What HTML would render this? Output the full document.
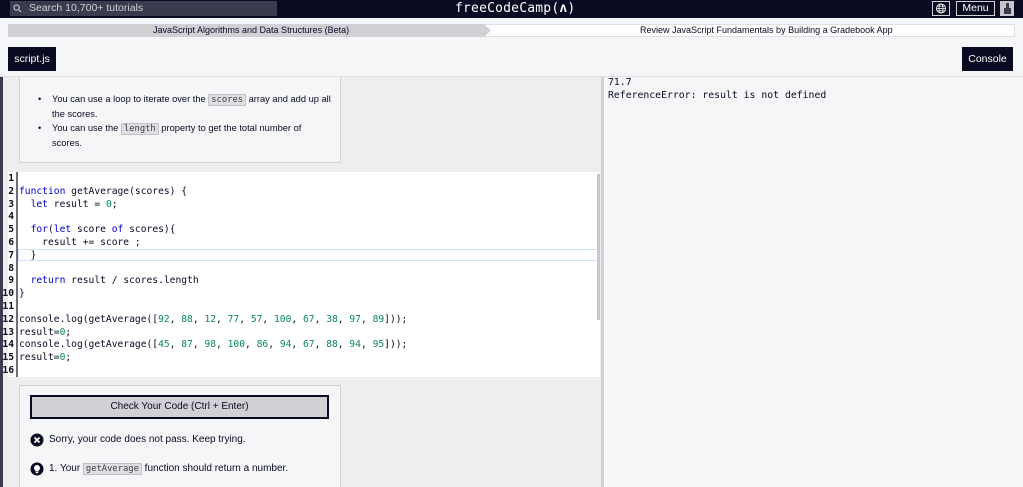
<!DOCTYPE html>
<html><head><style>
*{margin:0;padding:0;box-sizing:border-box}
html,body{width:1023px;height:487px;overflow:hidden}
body{background:#f5f6f7;font-family:"Liberation Sans",sans-serif;position:relative}
.abs{position:absolute}
.nav{left:0;top:0;width:1023px;height:18px;background:#0a0a23}
.mono{font-family:"DejaVu Sans Mono","Liberation Mono",monospace}
code.i{font-family:"DejaVu Sans Mono",monospace;font-size:8.8px;background:#dfdfe2;border:1px solid #c0c0c5;padding:0 2px;color:#3b3b4f}
.code{font-family:"DejaVu Sans Mono",monospace;font-size:9.65px;line-height:12.8px;white-space:pre;color:#0a0a23}
.k{color:#0000cc}.n{color:#09885a}
.li{position:relative;padding-left:14px;white-space:nowrap}
</style></head><body>
<div class="abs nav"></div>
<div class="abs" style="left:10px;top:1px;width:267px;height:15px;background:#3b3b4f"></div>
<svg class="abs" style="left:13px;top:4px" width="9" height="9" viewBox="0 0 9 9"><circle cx="3.6" cy="3.6" r="2.6" fill="none" stroke="#d0d0d5" stroke-width="1"/><path d="M5.5 5.5L8 8" stroke="#d0d0d5" stroke-width="1"/></svg>
<div class="abs" style="left:29px;top:2px;font-size:10.5px;color:#d0d0d5">Search 10,700+ tutorials</div>
<div class="abs mono" style="left:455px;top:1px;font-size:13px;color:#fff;letter-spacing:0.2px">freeCodeCamp(<b>ʌ</b>)</div>
<div class="abs" style="left:932px;top:1px;width:18px;height:15px;border:1px solid #d0d0d5"></div>
<svg class="abs" style="left:935px;top:3px" width="12" height="11" viewBox="0 0 12 11"><circle cx="6" cy="5.5" r="4.5" fill="none" stroke="#fff" stroke-width="0.9"/><ellipse cx="6" cy="5.5" rx="2" ry="4.5" fill="none" stroke="#fff" stroke-width="0.8"/><path d="M1.5 5.5h9M2.2 3.2h7.6M2.2 7.8h7.6" stroke="#fff" stroke-width="0.7"/></svg>
<div class="abs" style="left:956px;top:1px;width:39px;height:15px;border:1px solid #d0d0d5;color:#fff;font-size:10.5px;text-align:center;line-height:13px">Menu</div>
<div class="abs" style="left:1000px;top:1px;width:14px;height:15px;background:#c6c6cc"></div>
<div class="abs" style="left:1004px;top:8px;width:7px;height:6px;background:#3b3b4f"></div>
<div class="abs" style="left:1006px;top:3px;width:3px;height:5px;background:#3b3b4f"></div>
<div class="abs" style="left:8px;top:24px;width:1007px;height:13px;border:1px solid #dfdfe2;background:#fff"></div>
<svg class="abs" style="left:8px;top:24px" width="485" height="13"><path d="M0 0H476L483 6.5L476 13H0Z" fill="#d0d0d5"/></svg>
<div class="abs" style="left:153px;top:25px;font-size:9px;color:#0a0a23">JavaScript Algorithms and Data Structures (Beta)</div>
<div class="abs" style="left:640px;top:25px;font-size:9px;color:#0a0a23">Review JavaScript Fundamentals by Building a Gradebook App</div>
<div class="abs" style="left:8px;top:47px;width:48px;height:24px;background:#0a0a23;color:#fff;font-size:10.5px;text-align:center;line-height:24px">script.js</div>
<div class="abs" style="left:962px;top:47px;width:51px;height:24px;background:#0a0a23;color:#fff;font-size:10.5px;text-align:center;line-height:24px">Console</div>
<div class="abs" style="left:0;top:76px;width:1023px;height:1px;background:#dfdfe2"></div>
<div class="abs" style="left:0;top:77px;width:601px;height:410px;background:#eeeeef"></div>
<div class="abs" style="left:0;top:77px;width:3px;height:410px;background:#3b3b4f"></div>
<div class="abs" style="left:19px;top:77px;width:322px;height:86px;background:#f5f6f7;border:1px solid #d0d0d5;border-top:none"></div>
<div class="abs" style="left:38px;top:93px;font-size:9.3px;line-height:13.5px;color:#0a0a23">
<div class="li"><span style="position:absolute;left:0">•</span>You can use a loop to iterate over the <code class="i">scores</code> array and add up all<br>the scores.</div>
<div class="li" style="margin-top:1px"><span style="position:absolute;left:0">•</span>You can use the <code class="i">length</code> property to get the total number of<br>scores.</div>
</div>
<div class="abs" style="left:8px;top:172px;width:592px;height:205px;background:#fff"></div>
<div class="abs" style="left:16px;top:172px;width:2px;height:205px;background:#6d6d7a"></div>
<div class="abs" style="left:18px;top:249px;width:582px;height:12px;border:1px solid #cfe2f3"></div>
<div class="abs" style="left:597px;top:174px;width:3px;height:146px;background:#c8c8cc"></div>
<div class="abs code" style="left:2px;top:173px;width:12px;text-align:right;color:#0a0a23;font-weight:bold">1
2
3
4
5
6
7
8
9
10
11
12
13
14
15
16</div>
<div class="abs code" style="left:19px;top:173px">
<span class="k">function</span> getAverage(scores) {
  <span class="k">let</span> result = <span class="n">0</span>;

  <span class="k">for</span>(<span class="k">let</span> score <span class="k">of</span> scores){
    result += score ;
  }

  <span class="k">return</span> result / scores.length
}

console.log(getAverage([<span class="n">92</span>, <span class="n">88</span>, <span class="n">12</span>, <span class="n">77</span>, <span class="n">57</span>, <span class="n">100</span>, <span class="n">67</span>, <span class="n">38</span>, <span class="n">97</span>, <span class="n">89</span>]));
result=<span class="n">0</span>;
console.log(getAverage([<span class="n">45</span>, <span class="n">87</span>, <span class="n">98</span>, <span class="n">100</span>, <span class="n">86</span>, <span class="n">94</span>, <span class="n">67</span>, <span class="n">88</span>, <span class="n">94</span>, <span class="n">95</span>]));
result=<span class="n">0</span>;
</div>
<div class="abs" style="left:19px;top:385px;width:322px;height:110px;background:#f5f6f7;border:1px solid #d0d0d5"></div>
<div class="abs" style="left:30px;top:395px;width:299px;height:24px;background:#d0d0d5;border:2px solid #0a0a23;font-size:10px;text-align:center;line-height:20px;color:#0a0a23">Check Your Code (Ctrl + Enter)</div>
<svg class="abs" style="left:30px;top:433px" width="14" height="14" viewBox="0 0 14 14"><circle cx="7" cy="7" r="6.5" fill="#0a0a23"/><path d="M4.5 4.5L9.5 9.5M9.5 4.5L4.5 9.5" stroke="#fff" stroke-width="1.8"/></svg>
<div class="abs" style="left:49px;top:434px;font-size:10px;color:#0a0a23">Sorry, your code does not pass. Keep trying.</div>
<svg class="abs" style="left:30px;top:462px" width="14" height="14" viewBox="0 0 14 14"><circle cx="7" cy="7" r="6.5" fill="#0a0a23"/><path d="M7 3A3 3 0 0 1 9 8.2L8.4 9.5H5.6L5 8.2A3 3 0 0 1 7 3Z" fill="#fff"/><rect x="5.8" y="10" width="2.4" height="1.2" fill="#fff"/></svg>
<div class="abs" style="left:49px;top:463px;font-size:10px;color:#0a0a23">1. Your <code class="i">getAverage</code> function should return a number.</div>
<div class="abs" style="left:601px;top:77px;width:3px;height:410px;background:#d0d0d5"></div>
<div class="abs code" style="left:608px;top:76px;font-size:9.8px;line-height:13px;color:#0a0a23">71.7
ReferenceError: result is not defined</div>
</body></html>
